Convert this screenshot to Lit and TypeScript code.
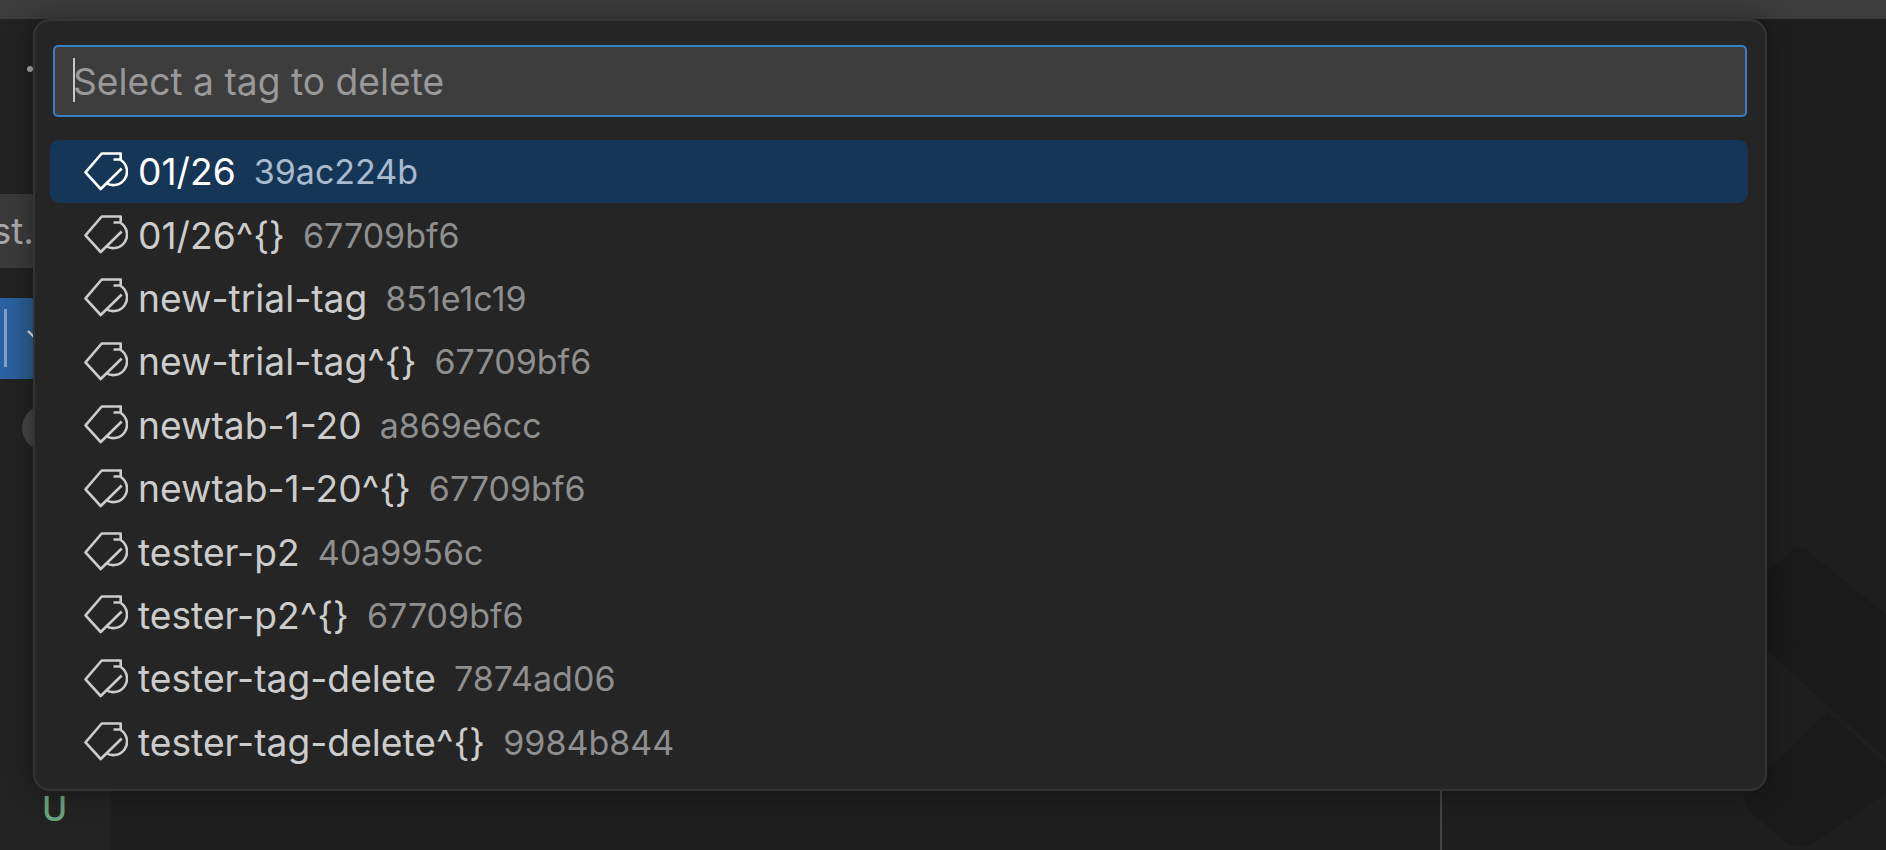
import { LitElement, html, css } from "lit";
import { customElement } from "lit/decorators.js";

const TAGS = [
  ["01/26", "39ac224b"],
  ["01/26^{}", "67709bf6"],
  ["new-trial-tag", "851e1c19"],
  ["new-trial-tag^{}", "67709bf6"],
  ["newtab-1-20", "a869e6cc"],
  ["newtab-1-20^{}", "67709bf6"],
  ["tester-p2", "40a9956c"],
  ["tester-p2^{}", "67709bf6"],
  ["tester-tag-delete", "7874ad06"],
  ["tester-tag-delete^{}", "9984b844"],
];

const tagIcon = html`<svg class="tag" viewBox="0 0 44 40" fill="none" stroke="currentColor" stroke-width="2.6" stroke-linejoin="round">
  <path d="M29.5 7.5 H36.7 V1.5 H17.7 L1.5 20.3 L16.7 37 L37.7 16.5" />
  <path d="M36.7 8 A11.7 11.7 0 1 1 22 31" />
</svg>`;

@customElement("app-root")
export class AppRoot extends LitElement {
  static styles = css`
    :host {
      display: block;
      width: 1886px;
      height: 850px;
      overflow: hidden;
      position: relative;
      background: #1e1e1e;
      font-family: Inter, "Noto Sans", sans-serif;
    }
    .titlebar {
      height: 19px;
      background: #3c3c3c;
    }
    .workbench {
      height: 831px;
      display: flex;
    }
    .sidebar {
      width: 111px;
      background: #222222;
      display: flex;
      flex-direction: column;
    }
    .editor {
      flex: 1;
      background: #1e1e1e;
      position: relative;
    }
    .dot {
      width: 6px;
      height: 6px;
      border-radius: 50%;
      background: #a8a8a8;
      margin: 47px 0 0 27px;
    }
    .tab {
      margin-top: 122px;
      height: 74px;
      width: 34px;
      background: #3a3a3a;
      color: #a8a8a8;
      font-size: 37px;
      line-height: 74px;
      display: flex;
      justify-content: flex-end;
      overflow: hidden;
      white-space: nowrap;
    }
    .commit {
      margin-top: 30px;
      height: 81px;
      width: 34px;
      background: linear-gradient(90deg, #2b62a3, #2a5a90);
      position: relative;
    }
    .commit i {
      position: absolute;
      left: 4px;
      top: 11px;
      width: 3px;
      height: 58px;
      background: #7f9fc6;
    }
    .commit svg {
      position: absolute;
      left: 26px;
      top: 32px;
    }
    .avatar {
      margin: 26px 0 0 22px;
      width: 46px;
      height: 46px;
      border-radius: 50%;
      background: #444444;
    }
    .status {
      margin: auto 0 23px 42px;
      color: #6aa07a;
      font-size: 34px;
      font-weight: 500;
      line-height: 36px;
    }
    .ruler {
      position: absolute;
      left: 1329px;
      top: 0;
      bottom: 0;
      width: 2px;
      background: #444444;
    }
    .mark {
      position: absolute;
      left: 1700px;
      top: 530px;
    }
    .dialog {
      position: absolute;
      left: 33px;
      top: 19px;
      width: 1734px;
      height: 772px;
      box-sizing: border-box;
      background: #252525;
      border: 2px solid #343434;
      border-radius: 17px;
      box-shadow: 0 0 26px rgba(0, 0, 0, 0.36);
      padding: 24px 17px 0 15px;
    }
    .input {
      margin: 0 1px 0 3px;
      height: 72px;
      box-sizing: border-box;
      background: #3d3d3d;
      border: 2px solid #3a7dc9;
      border-radius: 5px;
      display: flex;
      align-items: center;
      padding-left: 18px;
      color: #999999;
      font-size: 37.2px;
      font-weight: 410;
      position: relative;
    }
    .caret {
      position: absolute;
      left: 18px;
      top: 11px;
      width: 2px;
      height: 44px;
      background: #c8c8c8;
    }
    .list {
      margin-top: 23px;
      display: grid;
      grid-auto-rows: 63.4px;
    }
    .row {
      display: flex;
      align-items: center;
      border-radius: 9px;
      padding-left: 34px;
      color: #cccccc;
      font-size: 37.2px;
      font-weight: 410;
      white-space: nowrap;
    }
    .tag {
      width: 44px;
      height: 40px;
      margin-right: 10px;
    }
    .hash {
      margin-left: 18px;
      color: #8f8f8f;
      font-size: 34px;
    }
    .row.on {
      background: #163657;
      color: #ffffff;
    }
    .row.on .hash {
      color: #a8bace;
    }
  `;

  render() {
    return html`
      <div class="titlebar"></div>
      <div class="workbench">
        <div class="sidebar">
          <div class="dot"></div>
          <div class="tab">st.</div>
          <div class="commit">
            <i></i>
            <svg width="8" height="8" viewBox="0 0 8 8" fill="none" stroke="#dddddd" stroke-width="2.4">
              <path d="M2 1 L8 7" />
            </svg>
          </div>
          <div class="avatar"></div>
          <div class="status">U</div>
        </div>
        <div class="editor">
          <div class="ruler"></div>
        </div>
      </div>
      <svg class="mark" width="186" height="320" viewBox="0 0 186 320" fill="#1a1a1a">
        <path d="M100 30 L200 112 L200 225 L60 98 L20 98 Z" stroke="#1a1a1a" stroke-width="24" stroke-linejoin="round" />
        <path d="M127 182 L205 250 L116 311 Q100 322 84 311 L51 282 Q38 268 51 256 Z" />
      </svg>
      <div class="dialog">
        <div class="input"><span class="caret"></span>Select a tag to delete</div>
        <div class="list">
          ${TAGS.map(
            ([name, hash], i) => html`
              <div class="row ${i === 0 ? "on" : ""}">
                ${tagIcon}<span>${name}</span><span class="hash">${hash}</span>
              </div>
            `
          )}
        </div>
      </div>
    `;
  }
}
